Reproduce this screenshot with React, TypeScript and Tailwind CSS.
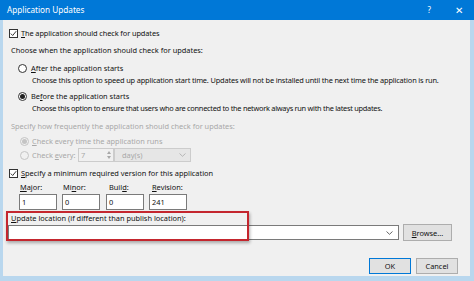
import React from "react";

function CheckBox() {
  return (
    <span className="inline-flex w-[9px] h-[9px] border border-[#333333] bg-white items-center justify-center shrink-0">
      <svg width="7" height="7" viewBox="0 0 7 7">
        <path d="M0.8 3.6 L2.7 5.5 L6.2 1.2" fill="none" stroke="#222" strokeWidth="0.9" />
      </svg>
    </span>
  );
}

function Radio({ checked, disabled }: { checked?: boolean; disabled?: boolean }) {
  return (
    <span
      className={
        "inline-flex w-[9px] h-[9px] rounded-full border items-center justify-center shrink-0 " +
        (disabled ? "border-[#c4c4c4] bg-[#f0f0f0]" : "border-[#333333] bg-white")
      }
    >
      {checked ? (
        <span className={"w-[5px] h-[5px] rounded-full " + (disabled ? "bg-[#c4c4c4]" : "bg-[#222]")} />
      ) : null}
    </span>
  );
}

export default function App() {
  return (
    <div className="w-[474px] h-[281px] bg-[#b9d7ee] flex flex-col overflow-hidden font-['Noto_Sans',sans-serif] text-[7.4px] leading-[12px] text-[#111] whitespace-nowrap">
      <div className="h-[20px] bg-[#0078d7] flex items-center text-white shrink-0">
        <span className="ml-[7px] text-[8.2px]">Application Updates</span>
        <span className="ml-auto mr-[24px] text-[8px]">?</span>
        <span className="mr-[11px] text-[10px] leading-none">✕</span>
      </div>
      <div className="flex-1 ml-[3px] mr-[4px] mb-[5px] bg-[#f0f0f0] flex flex-col relative">
        <div className="flex items-center h-[12px] mt-[7px] ml-[6px] gap-[3px]">
          <CheckBox />
          <span className="tracking-[-0.1px]">
            <u>T</u>he application should check for updates
          </span>
        </div>
        <div className="h-[12px] mt-[5px] ml-[8px]">Choose when the application should check for updates:</div>
        <div className="flex items-center h-[12px] mt-[6px] ml-[15px] gap-[4px]">
          <Radio />
          <span>
            <u>A</u>fter the application starts
          </span>
        </div>
        <div className="h-[12px] ml-[29px] tracking-[-0.17px]">
          Choose this option to speed up application start time. Updates will not be installed until the next time the application is run.
        </div>
        <div className="flex items-center h-[12px] mt-[4px] ml-[15px] gap-[4px]">
          <Radio checked />
          <span>
            Be<u>f</u>ore the application starts
          </span>
        </div>
        <div className="h-[12px] ml-[29px] tracking-[-0.28px]">
          Choose this option to ensure that users who are connected to the network always run with the latest updates.
        </div>
        <div className="h-[12px] mt-[6px] ml-[8px] text-[#a8a8a8]">
          Specify how frequently the application should check for updates:
        </div>
        <div className="flex items-center h-[12px] mt-[3px] ml-[17px] gap-[3px] text-[#a8a8a8]">
          <Radio checked disabled />
          <span>
            <u>C</u>heck every time the application runs
          </span>
        </div>
        <div className="flex items-center h-[14px] mt-[1px] ml-[17px] text-[#a8a8a8]">
          <Radio disabled />
          <span className="ml-[3px]">
            Check <u>e</u>very:
          </span>
          <div className="ml-auto w-[36px] h-[14px] border border-[#cccccc] bg-[#f0f0f0] flex items-center">
            <span className="ml-[2px]">7</span>
            <span className="ml-auto mr-[2px] flex flex-col gap-[2px]">
              <svg width="4" height="3" viewBox="0 0 4 3">
                <path d="M0 3 L2 0 L4 3 Z" fill="#a8a8a8" />
              </svg>
              <svg width="4" height="3" viewBox="0 0 4 3">
                <path d="M0 0 L2 3 L4 0 Z" fill="#a8a8a8" />
              </svg>
            </span>
          </div>
          <div className="w-[77px] h-[14px] border border-[#cccccc] bg-[#e6e6e6] flex items-center mr-[279px]">
            <span className="ml-[7px]">day(s)</span>
            <svg className="ml-auto mr-[4px]" width="7" height="4" viewBox="0 0 7 4">
              <path d="M0.5 0.5 L3.5 3.3 L6.5 0.5" fill="none" stroke="#b0b0b0" strokeWidth="0.9" />
            </svg>
          </div>
        </div>
        <div className="flex items-center h-[12px] mt-[5px] ml-[6px] gap-[3px]">
          <CheckBox />
          <span>
            <u>S</u>pecify a minimum required version for this application
          </span>
        </div>
        <div className="flex h-[12px] mt-[2px] ml-[16px] gap-[6px]">
          <div className="w-[37px] ml-[1px]">
            <u>M</u>ajor:
          </div>
          <div className="w-[39px]">
            Mi<u>n</u>or:
          </div>
          <div className="w-[37px] ml-[1px]">
            Buil<u>d</u>:
          </div>
          <div className="w-[38px]">
            <u>R</u>evision:
          </div>
        </div>
        <div className="flex h-[16px] mt-[1px] ml-[16px]">
          <div className="w-[38px] border border-[#7a7a7a] bg-white pl-[2px] leading-[14px]">1</div>
          <div className="w-[38px] ml-[5px] border border-[#7a7a7a] bg-white pl-[2px] leading-[14px]">0</div>
          <div className="w-[38px] ml-[6px] border border-[#7a7a7a] bg-white pl-[2px] leading-[14px]">0</div>
          <div className="w-[38px] ml-[5px] border border-[#7a7a7a] bg-white pl-[2px] leading-[14px]">241</div>
        </div>
        <div className="h-[12px] mt-[2px] ml-[8px]">
          <u>U</u>pdate location (if different than publish location):
        </div>
        <div className="flex items-center h-[17px] ml-[5px]">
          <div className="w-[391px] h-[15px] border border-[#7a7a7a] bg-white flex items-center">
            <svg className="ml-auto mr-[5px]" width="7" height="4" viewBox="0 0 7 4">
              <path d="M0.5 0.5 L3.5 3.3 L6.5 0.5" fill="none" stroke="#555" strokeWidth="0.9" />
            </svg>
          </div>
          <div className="ml-[4px] w-[49px] h-[17px] border border-[#adadad] bg-[#e1e1e1] flex items-center justify-center">
            <span>
              <u>B</u>rowse...
            </span>
          </div>
        </div>
        <div className="flex justify-end mt-[17px] mr-[12px] gap-[5px]">
          <div className="w-[42px] h-[16px] border border-[#0078d7] bg-[#e1e1e1] flex items-center justify-center">OK</div>
          <div className="w-[42px] h-[16px] border border-[#adadad] bg-[#e1e1e1] flex items-center justify-center">Cancel</div>
        </div>
        <div className="absolute left-[3px] top-[191px] w-[243px] h-[30px] border-2 border-[#c4262e] shadow-[1px_2px_3px_rgba(0,0,0,0.3)]" />
      </div>
    </div>
  );
}
